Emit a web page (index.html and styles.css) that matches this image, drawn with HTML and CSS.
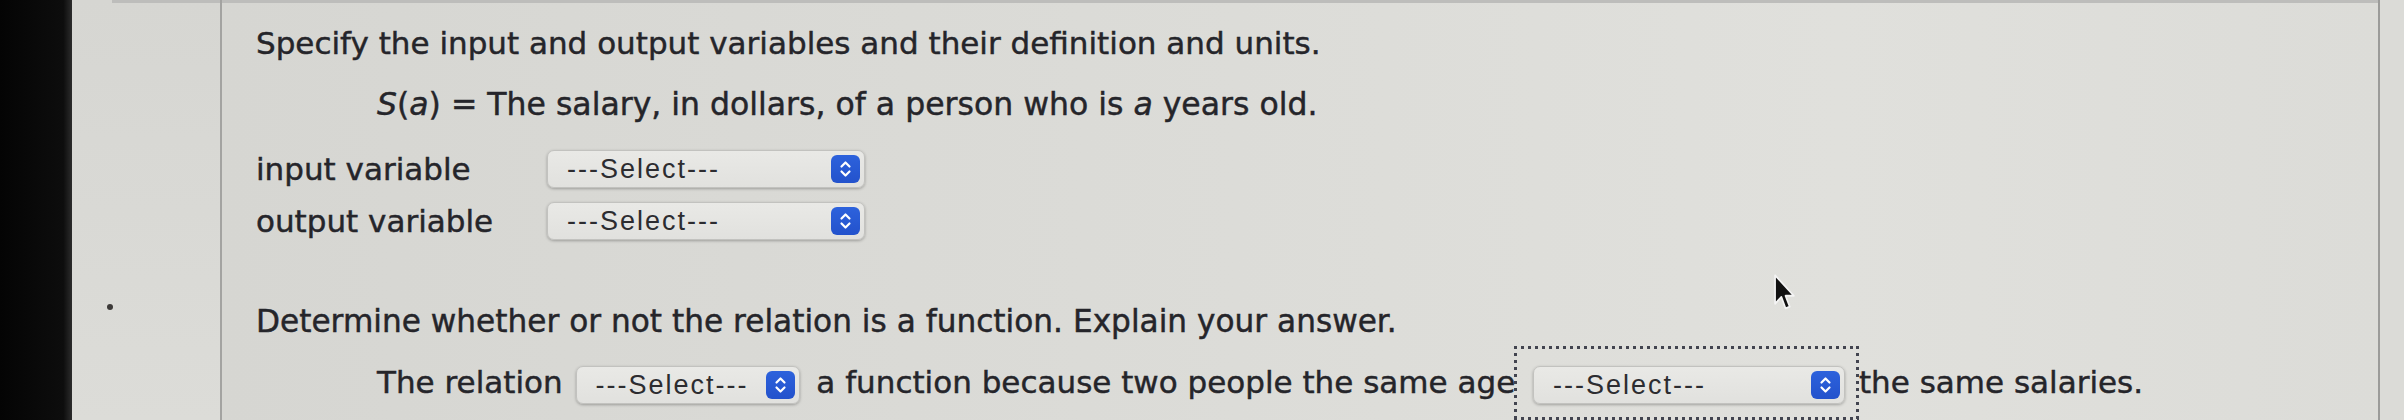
FILE: index.html
```html
<!DOCTYPE html>
<html lang="en">
<head>
  <meta charset="UTF-8" />
  <meta name="viewport" content="width=device-width, initial-scale=1.0" />
  <title>Functions — Input and Output</title>
  <link rel="stylesheet" href="styles.css">
</head>
<body>
  <div class="screen">
    <div class="bezel"></div>

    <aside class="gutter">
      <span class="speck"></span>
    </aside>

    <main class="question">
      <p class="prompt">Specify the input and output variables and their definition and units.</p>
      <p class="definition"><i>S</i>(<i>a</i>) = The salary, in dollars, of a person who is <i>a</i> years old.</p>

      <div class="variables">
        <span class="label">input variable</span>
        <div class="select wide">
          <span>---Select---</span>
          <span class="stepper">
            <svg width="29" height="28" viewBox="0 0 29 28"><path d="M10.5 11.5 L14.5 7.5 L18.5 11.5 M10.5 16.5 L14.5 20.5 L18.5 16.5" /></svg>
          </span>
        </div>
        <span class="label">output variable</span>
        <div class="select wide">
          <span>---Select---</span>
          <span class="stepper">
            <svg width="29" height="28" viewBox="0 0 29 28"><path d="M10.5 11.5 L14.5 7.5 L18.5 11.5 M10.5 16.5 L14.5 20.5 L18.5 16.5" /></svg>
          </span>
        </div>
      </div>

      <p class="prompt determine">Determine whether or not the relation is a function. Explain your answer.</p>
      <p class="answer">The relation <span class="select short"><span>---Select---</span><span class="stepper"><svg width="29" height="28" viewBox="0 0 29 28"><path d="M10.5 11.5 L14.5 7.5 L18.5 11.5 M10.5 16.5 L14.5 20.5 L18.5 16.5" /></svg></span></span> a function because two people the same age <span class="focus"><span class="select mid"><span>---Select---</span><span class="stepper"><svg width="29" height="28" viewBox="0 0 29 28"><path d="M10.5 11.5 L14.5 7.5 L18.5 11.5 M10.5 16.5 L14.5 20.5 L18.5 16.5" /></svg></span></span></span> the same salaries.</p>
    </main>

    <div class="edge"></div>

    <!-- mouse pointer resting over the page -->
    <svg class="pointer" width="23" height="41" viewBox="0 0 22 36" preserveAspectRatio="none">
      <path d="M2 2 L2 27 L8 21 L12 31 L16 29.5 L12 20 L20 20 Z" />
    </svg>
  </div>
</body>
</html>
```

FILE: styles.css
```css
body {
  margin: 0;
  background: #d9d9d5;
  font-family: "DejaVu Sans", Verdana, sans-serif;
  color: #25252a;
}

.screen {
  position: relative;
  display: flex;
  height: 420px;
  overflow: hidden;
}

.bezel {
  width: 72px;
  background: linear-gradient(90deg, #040404, #0d0d0d 88%, #2c2c2c);
}

.gutter {
  position: relative;
  width: 148px;
  border-right: 2px solid #a3a3a1;
  background:
    linear-gradient(#bdbdbb, #bdbdbb) 40px 0 / 100% 3px no-repeat,
    linear-gradient(180deg, #d6d6d2, #dcdcd8);
}

.speck {
  position: absolute;
  left: 35px;
  top: 304px;
  width: 6px;
  height: 6px;
  border-radius: 50%;
  background: #3c3a38;
}

.question {
  flex: 1;
  padding: 25px 0 0 34px;
  background:
    linear-gradient(#bdbdbb, #bdbdbb) 0 0 / 100% 3px no-repeat,
    linear-gradient(90deg, #d6d6d2, #dbdbd7 40%, #e0e0dc 75%, #dcdcd8);
}

.question p {
  margin: 0;
}

.prompt,
.definition,
.label,
.answer {
  font-size: 31px;
  line-height: 36px;
  -webkit-text-stroke: 0.45px currentColor;
}

.definition {
  margin: 25px 0 0 121px !important;
  font-size: 31.5px !important;
}

.variables {
  display: grid;
  grid-template-columns: 291px auto;
  justify-content: start;
  align-items: center;
  row-gap: 14px;
  margin-top: 28px;
}

.determine {
  margin-top: 63px !important;
  font-size: 31.2px !important;
}

.answer {
  margin: 25px 0 0 121px !important;
}

/* dropdowns */
.select {
  display: inline-flex;
  align-items: center;
  justify-content: space-between;
  box-sizing: border-box;
  height: 38px;
  padding: 0 4px 0 19px;
  border: 1px solid #c2c2bf;
  border-radius: 7px;
  background: linear-gradient(#e9e9e6, #e1e1de);
  box-shadow: 0 1px 3px rgba(0, 0, 0, 0.28);
  font-family: "Liberation Sans", Arial, sans-serif;
  font-size: 27px;
  letter-spacing: 2px;
  color: #2c2c30;
  vertical-align: middle;
  -webkit-text-stroke: 0;
}

.wide {
  width: 318px;
}

.short {
  width: 224px;
  margin: 0 7px 0 3px;
}

.mid {
  width: 312px;
}

.stepper {
  display: flex;
  width: 29px;
  height: 28px;
  border-radius: 6px;
  background: linear-gradient(#2d62dc, #2352cc);
}

.stepper path {
  fill: none;
  stroke: #fff;
  stroke-width: 2.2;
  stroke-linecap: round;
  stroke-linejoin: round;
}

.focus {
  position: relative;
  display: inline-flex;
  margin: 0 4px 0 8px;
  vertical-align: middle;
}

/* dotted keyboard-focus ring round the last dropdown */
.focus::before {
  content: "";
  position: absolute;
  top: -20px;
  right: -14px;
  bottom: -16px;
  left: -19px;
  pointer-events: none;
  background:
    repeating-linear-gradient(90deg, #42444f 0 3px, transparent 3px 7px) left top / 100% 3px no-repeat,
    repeating-linear-gradient(90deg, #42444f 0 3px, transparent 3px 7px) left bottom / 100% 3px no-repeat,
    repeating-linear-gradient(180deg, #42444f 0 3px, transparent 3px 7px) left top / 3px 100% no-repeat,
    repeating-linear-gradient(180deg, #42444f 0 3px, transparent 3px 7px) right top / 3px 100% no-repeat;
}

.edge {
  width: 24px;
  border-left: 2px solid #9b9b99;
  background: #dbdbd7;
}

.pointer {
  position: absolute;
  left: 1773px;
  top: 273px;
}

.pointer path {
  fill: #111;
  stroke: #f4f4f4;
  stroke-width: 1.6;
  stroke-linejoin: round;
}
```
